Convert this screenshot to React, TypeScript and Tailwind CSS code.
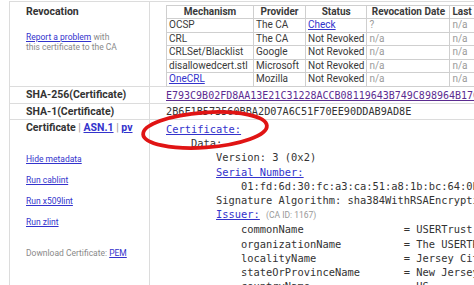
const link = "text-[#3333cc] underline";

const mechRows = [
  { m: "OCSP", p: "The CA", s: "Check", d: "?", l: "n/a" },
  { m: "CRL", p: "The CA", s: "Not Revoked", d: "n/a", l: "n/a" },
  { m: "CRLSet/Blacklist", p: "Google", s: "Not Revoked", d: "n/a", l: "n/a" },
  { m: "disallowedcert.stl", p: "Microsoft", s: "Not Revoked", d: "n/a", l: "n/a" },
  { m: "OneCRL", p: "Mozilla", s: "Not Revoked", d: "n/a", l: "n/a" },
];

const subject = [
  ["commonName", "USERTrust RSA Certification Authority"],
  ["organizationName", "The USERTRUST Network"],
  ["localityName", "Jersey City"],
  ["stateOrProvinceName", "New Jersey"],
  ["countryName", "US"],
];

function RevocationTable() {
  return (
    <table className="border-collapse text-[10px] leading-[12px] text-[#3a3a3a] whitespace-nowrap">
      <thead>
        <tr className="h-[12px]">
          <th className="border border-[#cfcfcf] w-[87px] px-[2px] font-bold">Mechanism</th>
          <th className="border border-[#cfcfcf] w-[52px] px-[2px] font-bold">Provider</th>
          <th className="border border-[#cfcfcf] w-[60px] px-[2px] font-bold">Status</th>
          <th className="border border-[#cfcfcf] w-[83px] px-[2px] font-bold">Revocation Date</th>
          <th className="border border-[#cfcfcf] px-[2px] font-bold text-left">Last Observed in CT Log</th>
        </tr>
      </thead>
      <tbody>
        {mechRows.map((r) => (
          <tr key={r.m} className="h-[13.5px]">
            <td className="border border-[#cfcfcf] px-[2px]">
              {r.m === "OneCRL" ? <span className={link}>{r.m}</span> : r.m}
            </td>
            <td className="border border-[#cfcfcf] px-[2px]">{r.p}</td>
            <td className="border border-[#cfcfcf] px-[2px]">
              {r.s === "Check" ? <span className={link}>{r.s}</span> : r.s}
            </td>
            <td className="border border-[#cfcfcf] px-[2px] text-[#9a9a9a]">{r.d}</td>
            <td className="border border-[#cfcfcf] px-[2px] text-[#9a9a9a]">{r.l}</td>
          </tr>
        ))}
      </tbody>
    </table>
  );
}

function Line({ indent, children }: { indent: number; children: React.ReactNode }) {
  return (
    <div className="whitespace-pre">
      {" ".repeat(indent)}
      {children}
    </div>
  );
}

export default function App() {
  return (
    <div className="relative w-[474px] h-[285px] overflow-hidden bg-white font-['Roboto','Liberation_Sans',sans-serif] text-[#333]">
      <div className="ml-[9px] mt-[1px] w-[640px] border-t border-l border-[#dcdcdc]">
        {/* revocation */}
        <div className="flex h-[85px] border-b border-[#dcdcdc]">
          <div className="w-[140px] shrink-0 border-r border-[#dcdcdc] pl-[16px] pt-[3px]">
            <div className="text-[10.5px] leading-[14px] font-bold">Revocation</div>
            <div className="mt-[13px] text-[8.5px] leading-[10px] text-[#8a8a8a]">
              <span className={link}>Report a problem</span> with
              <br />
              this certificate to the CA
            </div>
          </div>
          <div className="flex-1 pl-[16px] pt-[3px]">
            <RevocationTable />
          </div>
        </div>

        {/* sha-256 */}
        <div className="flex h-[17px] items-center border-b border-[#dcdcdc]">
          <div className="w-[140px] shrink-0 self-stretch flex items-center border-r border-[#dcdcdc] pl-[16px] text-[10.5px] font-bold">
            SHA-256(Certificate)
          </div>
          <div className="flex-1 pl-[16px] font-['DejaVu_Sans_Mono',monospace] text-[10px] text-[#5c2c91] underline whitespace-nowrap">
            E793C9B02FD8AA13E21C31228ACCB08119643B749C898964B17C0E7A3B1F8D52
          </div>
        </div>

        {/* sha-1 */}
        <div className="flex h-[16px] items-center border-b border-[#dcdcdc]">
          <div className="w-[140px] shrink-0 self-stretch flex items-center border-r border-[#dcdcdc] pl-[16px] text-[10.5px] font-bold">
            SHA-1(Certificate)
          </div>
          <div className="flex-1 pl-[16px] font-['DejaVu_Sans_Mono',monospace] text-[10.2px] text-[#333] whitespace-nowrap">
            2B6F1B573560BBA2D07A6C51F70EE90DDAB9AD8E
          </div>
        </div>

        {/* certificate */}
        <div className="flex h-[200px]">
          <div className="w-[140px] shrink-0 border-r border-[#dcdcdc] pl-[16px] pt-[1px]">
            <div className="text-[10.5px] leading-[14px] font-bold">
              Certificate <span className="font-normal text-[#999]">|</span>{" "}
              <span className={link}>ASN.1</span> <span className="font-normal text-[#999]">|</span>{" "}
              <span className={link}>pv</span>
            </div>
            <div className="mt-[19px] flex flex-col gap-[10px] text-[8.5px] leading-[11px]">
              <span className={link}>Hide metadata</span>
              <span className={link}>Run cablint</span>
              <span className={link}>Run x509lint</span>
              <span className={link}>Run zlint</span>
              <span className="mt-[10px] text-[#8a8a8a]">
                Download Certificate: <span className={link}>PEM</span>
              </span>
            </div>
          </div>
          <div className="flex-1 pl-[16px] pt-[2px] font-['DejaVu_Sans_Mono',monospace] text-[10.4px] leading-[14.2px] text-[#333]">
            <Line indent={0}>
              <span className={link}>Certificate:</span>
            </Line>
            <Line indent={4}>Data:</Line>
            <Line indent={8}>Version: 3 (0x2)</Line>
            <Line indent={8}>
              <span className={link}>Serial Number:</span>
            </Line>
            <Line indent={12}>01:fd:6d:30:fc:a3:ca:51:a8:1b:bc:64:0b:35:03:2d:1c</Line>
            <Line indent={8}>Signature Algorithm: sha384WithRSAEncryption</Line>
            <Line indent={8}>
              <span className={link}>Issuer:</span>{" "}
              <span className="font-['Roboto','Liberation_Sans',sans-serif] text-[8.5px] text-[#999]">(CA ID: 1167)</span>
            </Line>
            {subject.map(([k, v]) => (
              <Line key={k} indent={12}>
                {k.padEnd(26, " ")}= {v}
              </Line>
            ))}
          </div>
        </div>
      </div>

      {/* hand-drawn red ellipse */}
      <svg className="absolute left-[138px] top-[108px]" width="136" height="46" viewBox="0 0 136 46" fill="none">
        <ellipse cx="67" cy="22" rx="62" ry="17.5" transform="rotate(-4 67 22)" stroke="#e01414" strokeWidth="3.8" />
      </svg>
    </div>
  );
}
